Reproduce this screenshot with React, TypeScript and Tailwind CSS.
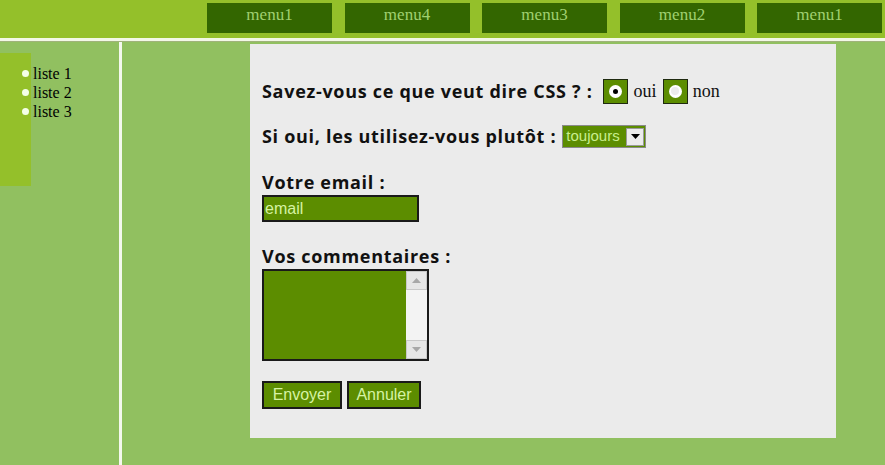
const menus = ["menu1", "menu4", "menu3", "menu2", "menu1"];
const items = ["liste 1", "liste 2", "liste 3"];

const Radio = ({ checked }: { checked: boolean }) => (
  <span className="flex h-[25px] w-[25px] shrink-0 items-center justify-center border border-[#1f2a10] bg-[#5c8d00]">
    <span className="flex h-[13px] w-[13px] items-center justify-center rounded-full bg-white">
      {checked ? (
        <span className="h-[5px] w-[5px] rounded-full bg-black" />
      ) : (
        <span className="h-[8px] w-[8px] rounded-full bg-[#ececec]" />
      )}
    </span>
  </span>
);

const Arrow = ({ up, color }: { up?: boolean; color: string }) => (
  <svg width="9" height="5" viewBox="0 0 9 5">
    <path d={up ? "M0 5 L4.5 0 L9 5 Z" : "M0 0 L9 0 L4.5 5 Z"} fill={color} />
  </svg>
);

export default function App() {
  return (
    <div className="h-[465px] w-[885px] overflow-hidden bg-[#91c060]">
      <div className="flex h-[38px] justify-end gap-[12.5px] bg-[#94c02a] pr-[3px] pt-[3px]">
        {menus.map((m, i) => (
          <div
            key={i}
            className="h-[30px] w-[125px] bg-[#336600] text-center text-[17px] leading-[24px] text-[#a0d070]"
            style={{ fontFamily: '"Liberation Serif", serif' }}
          >
            {m}
          </div>
        ))}
      </div>
      <div className="h-[3px] bg-[#f2f8e6]" />
      <div className="h-[1px] bg-[#9fb27a]" />

      <div className="flex h-[423px]">
        <div className="w-[119px] pt-[11px]">
          <div className="h-[133px] w-[31px] bg-[#94c02a]">
            <ul
              className="w-[100px] whitespace-nowrap pl-[22px] pt-[11px] text-[16px] leading-[19px] text-black"
              style={{ fontFamily: '"Liberation Serif", serif' }}
            >
              {items.map((it) => (
                <li key={it} className="flex items-center">
                  <span className="mr-[4px] h-[7px] w-[7px] shrink-0 rounded-full bg-[#f4ffe8]" />
                  {it}
                </li>
              ))}
            </ul>
          </div>
        </div>
        <div className="w-[3px] bg-[#f4f8ee]" />

        <div className="flex-1 pl-[128px] pt-[2px]">
          <div
            className="h-[394px] w-[586px] bg-[#ebebeb] pl-[12px] pt-[34px] text-[18px] font-bold tracking-[0.7px] text-[#111]"
            style={{ fontFamily: '"Open Sans", sans-serif' }}
          >
            <div className="flex h-[26px] items-center whitespace-nowrap">
              <span className="mr-[10px]">Savez-vous ce que veut dire CSS ? :</span>
              <Radio checked />
              <span
                className="mx-[6px] text-[18px] font-normal tracking-normal"
                style={{ fontFamily: '"Liberation Serif", serif' }}
              >
                oui
              </span>
              <Radio checked={false} />
              <span
                className="ml-[5px] text-[18px] font-normal tracking-normal"
                style={{ fontFamily: '"Liberation Serif", serif' }}
              >
                non
              </span>
            </div>

            <div className="mt-[21px] flex h-[23px] items-center whitespace-nowrap">
              <span className="mr-[6px]">Si oui, les utilisez-vous plutôt :</span>
              <div
                className="flex h-[23px] w-[84px] shrink-0 items-center border border-[#8a8a8a] bg-[#5c8d00] text-[15px] font-normal tracking-normal text-[#c9ef8e]"
                style={{ fontFamily: '"Liberation Sans", sans-serif' }}
              >
                <span className="flex-1 pl-[3px]">toujours</span>
                <span className="mr-[1px] flex h-[18px] w-[18px] items-center justify-center border border-[#9a9a9a] bg-[#ececec]">
                  <Arrow color="#000" />
                </span>
              </div>
            </div>

            <div className="mt-[22px] leading-[24px]">Votre email :</div>
            <div
              className="mt-[1px] flex h-[27px] w-[157px] items-center border-2 border-[#1a1a1a] bg-[#5c8d00] pl-[1px] text-[16px] font-normal tracking-normal text-[#d6f3a4]"
              style={{ fontFamily: '"Liberation Sans", sans-serif' }}
            >
              email
            </div>

            <div className="mt-[22px] leading-[24px]">Vos commentaires :</div>
            <div className="mt-[1px] flex h-[92px] w-[167px] border-2 border-[#1a1a1a] bg-[#5c8d00]">
              <div className="flex-1" />
              <div className="flex w-[21px] flex-col justify-between bg-[#f3f3f3]">
                <span className="flex h-[19px] items-center justify-center border border-[#c8c8c8] bg-[#e6e6e6]">
                  <Arrow up color="#a8a8a8" />
                </span>
                <span className="flex h-[19px] items-center justify-center border border-[#c8c8c8] bg-[#e6e6e6]">
                  <Arrow color="#a8a8a8" />
                </span>
              </div>
            </div>

            <div
              className="mt-[20px] flex gap-[5px] text-[16px] font-normal tracking-normal text-[#d6f3a4]"
              style={{ fontFamily: '"Liberation Sans", sans-serif' }}
            >
              <button className="h-[28px] w-[80px] border-2 border-[#1a1a1a] bg-[#5c8d00]">Envoyer</button>
              <button className="h-[28px] w-[74px] border-2 border-[#1a1a1a] bg-[#5c8d00]">Annuler</button>
            </div>
          </div>
        </div>
      </div>
    </div>
  );
}
